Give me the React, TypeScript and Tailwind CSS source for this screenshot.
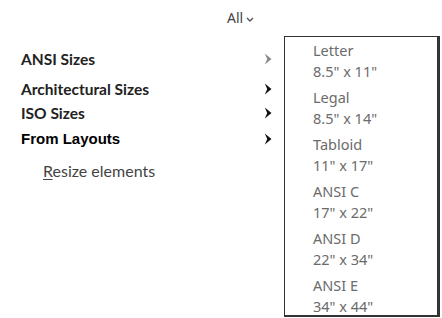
import React from "react";

const sizes = [
  { name: "Letter", dim: '8.5" x 11"' },
  { name: "Legal", dim: '8.5" x 14"' },
  { name: "Tabloid", dim: '11" x 17"' },
  { name: "ANSI C", dim: '17" x 22"' },
  { name: "ANSI D", dim: '22" x 34"' },
  { name: "ANSI E", dim: '34" x 44"' },
];

function Chevron({ muted }: { muted?: boolean }) {
  return (
    <svg width="8" height="12" viewBox="0 0 8 12" className="shrink-0">
      <path
        d="M0.8 0.5 L7.5 6 L0.8 11.5 L3.2 6 Z"
        fill={muted ? "#8a8a8a" : "#111"}
      />
    </svg>
  );
}

function MenuRow({
  label,
  muted,
  arial,
  className,
}: {
  label: string;
  muted?: boolean;
  arial?: boolean;
  className?: string;
}) {
  return (
    <div className={`flex items-center justify-between pl-[21px] pr-[12px] ${className ?? ""}`}>
      <span
        className={`font-bold leading-[20px] ${
          arial
            ? "text-[15px] font-['Liberation_Sans',sans-serif] text-black"
            : "text-[15.5px] font-['Lato',sans-serif] text-[#222]"
        }`}
      >
        {label}
      </span>
      <Chevron muted={muted} />
    </div>
  );
}

export default function App() {
  return (
    <div className="w-[442px] h-[318px] bg-white overflow-hidden">
      {/* Filter header */}
      <div className="h-[36px] flex items-start pl-[227px] pt-[9px]">
        <span className="text-[14px] leading-[18px] text-[#444] font-['Noto_Sans',sans-serif]">All</span>
        <svg width="8" height="6" viewBox="0 0 8 6" className="ml-[3px] mt-[8px]">
          <path d="M1 1 L4 4 L7 1" stroke="#555" strokeWidth="1.4" fill="none" />
        </svg>
      </div>

      <div className="flex">
        {/* Left menu */}
        <div className="w-[284px] flex flex-col">
          <MenuRow label="ANSI Sizes" muted className="mt-[13px]" />
          <MenuRow label="Architectural Sizes" className="mt-[10px]" />
          <MenuRow label="ISO Sizes" className="mt-[4px]" />
          <MenuRow label="From Layouts" arial className="mt-[6px]" />
          <div className="pl-[43px] mt-[12px] text-[16px] leading-[20px] text-[#444] font-['Lato',sans-serif]">
            <span className="underline underline-offset-2">R</span>esize elements
          </div>
        </div>

        {/* Submenu */}
        <div className="w-[156px] h-[281px] border-t border-l border-r-[3px] border-b-[2px] border-[#333] pl-[28px] pt-[3px] flex flex-col gap-[5px]">
          {sizes.map((s) => (
            <div key={s.name} className="text-[14.5px] leading-[21px] text-[#6b6b6b] font-['Noto_Sans',sans-serif]">
              <div>{s.name}</div>
              <div>{s.dim}</div>
            </div>
          ))}
        </div>
      </div>
    </div>
  );
}
